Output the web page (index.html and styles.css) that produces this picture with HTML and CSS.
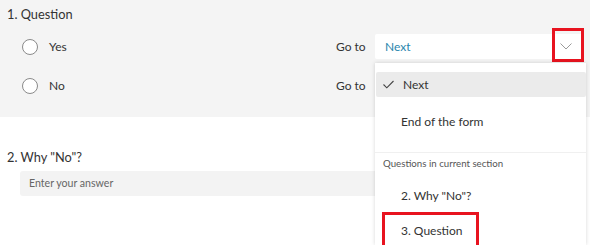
FILE: index.html
```html
<!DOCTYPE html>
<html>
<head>
<meta charset="utf-8">
<link rel="stylesheet" href="styles.css">
</head>
<body>
<div class="page">
  <section class="q q1">
    <div class="q-title">1. Question</div>
    <div class="opt">
      <span class="radio"></span>
      <span class="opt-label">Yes</span>
      <span class="goto">Go to</span>
      <div class="select">
        <span class="select-val">Next</span>
        <svg class="chev" width="12" height="7" viewBox="0 0 12 7"><path d="M0.5 0.5 L6 6 L11.5 0.5" fill="none" stroke="#9a9a9a" stroke-width="1"/></svg>
      </div>
    </div>
    <div class="opt">
      <span class="radio"></span>
      <span class="opt-label">No</span>
      <span class="goto">Go to</span>
      <div class="select"></div>
    </div>
  </section>
  <section class="q q2">
    <div class="q-title">2. Why "No"?</div>
    <div class="answer">Enter your answer</div>
  </section>

  <div class="mark mark-chev"></div>

  <div class="menu">
    <div class="item selected">
      <svg class="check" width="11" height="9" viewBox="0 0 11 9"><path d="M0.5 4.5 L3.8 7.8 L10.5 1" fill="none" stroke="#444" stroke-width="1.1"/></svg>
      <span>Next</span>
    </div>
    <div class="item tall"><span>End of the form</span></div>
    <div class="divider"></div>
    <div class="group">Questions in current section</div>
    <div class="item q-item first"><span>2. Why "No"?</span></div>
    <div class="item q-item"><span>3. Question</span></div>
    <div class="mark mark-q3"></div>
  </div>
</div>
</body>
</html>
```
FILE: styles.css
```css
* { box-sizing: border-box; }
html, body { margin: 0; padding: 0; }
body {
  width: 590px;
  height: 245px;
  overflow: hidden;
  background: #fff;
  font-family: "Lato", "Noto Sans", sans-serif;
  color: #333;
}
.page { position: relative; width: 590px; height: 245px; overflow: hidden; }

.q1 {
  background: #f4f4f4;
  height: 117px;
  padding: 4px 0 0 7px;
}
.q-title {
  font-size: 12.8px;
  line-height: 20px;
  color: #333;
}
.q1 .q-title { margin-bottom: 3px; }
.opt {
  display: flex;
  align-items: center;
  height: 39px;
  padding-left: 15px;
}
.radio {
  width: 16px;
  height: 16px;
  border: 1.5px solid #8a8a8a;
  border-radius: 50%;
  background: #fff;
  flex: none;
}
.opt-label {
  margin-left: 11px;
  font-size: 12px;
  width: 287px;
  color: #333;
}
.goto {
  font-size: 12px;
  width: 39px;
  color: #333;
}
.select {
  width: 208px;
  height: 25px;
  background: #fff;
  border-radius: 2px;
  display: flex;
  align-items: center;
  justify-content: space-between;
  padding: 0 10px 0 10px;
}
.select-val {
  font-size: 12px;
  color: #2a86ad;
}
.chev { margin-right: 1px; }

.q2 { padding: 30px 0 0 7px; }
.answer {
  margin: 4px 0 0 13px;
  width: 563px;
  height: 25px;
  background: #f3f3f3;
  border-radius: 3px;
  font-size: 10.6px;
  line-height: 25px;
  padding-left: 9px;
  color: #666;
}

.mark {
  position: absolute;
  border: 3px solid #e8131f;
}
.mark-chev { left: 552px; top: 28px; width: 32px; height: 34px; }

.menu {
  position: absolute;
  left: 375px;
  top: 63px;
  width: 211px;
  height: 182px;
  overflow: hidden;
  background: #fff;
  box-shadow: 0 0 4px rgba(0,0,0,0.16);
  padding-top: 9px;
}
.item {
  display: flex;
  align-items: center;
  font-size: 12px;
  color: #333;
  padding-left: 26px;
  height: 25px;
}
.item.selected {
  background: #ebebeb;
  border-radius: 2px;
  margin-left: 1px;
  padding-left: 7px;
}
.check { margin-right: 9px; }
.tall { height: 49px; }
.divider {
  height: 1px;
  background: #f0f0f0;
  margin-top: 6px;
}
.group {
  font-size: 9.7px;
  color: #555;
  padding-left: 8px;
  line-height: 18px;
  margin-top: 1px;
}
.q-item { height: 35px; }
.q-item.first { margin-top: 6px; }
.mark-q3 { left: 7px; top: 149px; width: 97px; height: 40px; }
```
